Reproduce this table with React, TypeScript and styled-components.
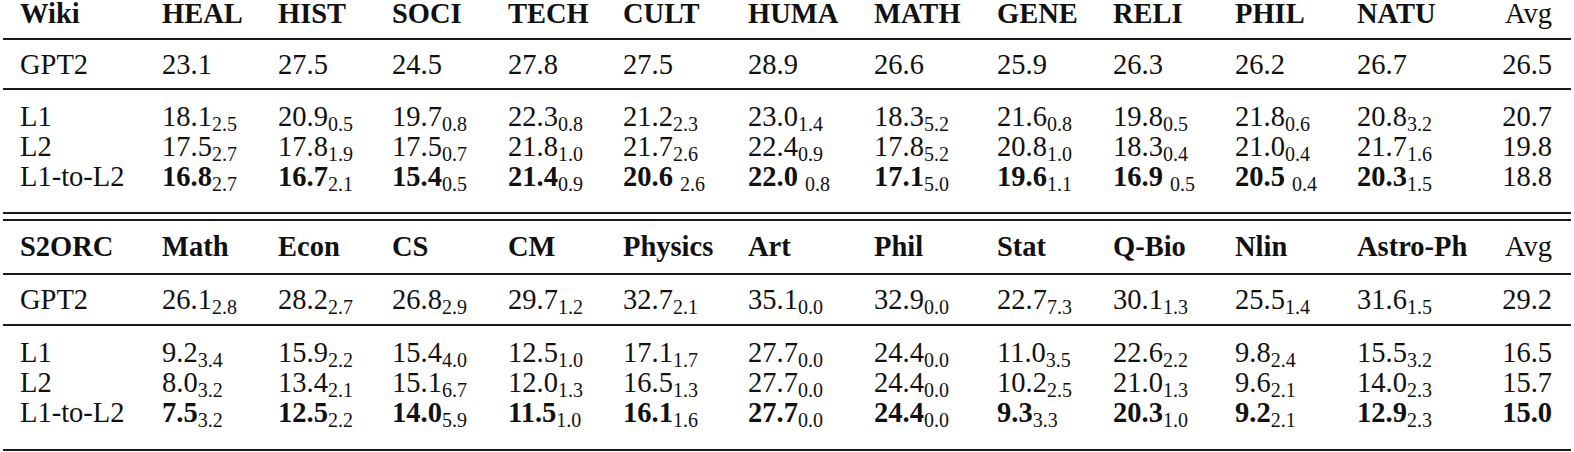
import React from 'react';
import styled, { createGlobalStyle } from 'styled-components';

const GlobalStyle = createGlobalStyle`
  html, body {
    margin: 0;
    padding: 0;
    background: #ffffff;
  }
  body {
    font-family: "Liberation Serif", "Times New Roman", Times, "DejaVu Serif", serif;
    color: #111111;
  }
`;

const Table = styled.div`
  width: 1568px;
  margin: 0 3px;
  font-family: "Liberation Serif", "Times New Roman", Times, "DejaVu Serif", serif;
  font-size: 28.5px;
`;

const Block = styled.div<{ $pt: number; $pb: number }>`
  padding-top: ${({ $pt }) => $pt}px;
  padding-bottom: ${({ $pb }) => $pb}px;
`;

const Rule = styled.div<{ $double?: boolean }>`
  height: ${({ $double }) => ($double ? '5px' : '0')};
  border-top: 2px solid #1a1a1a;
  border-bottom: ${({ $double }) => ($double ? '2px solid #1a1a1a' : 'none')};
`;

const Row = styled.div<{ $lh: number }>`
  display: grid;
  grid-template-columns: 142px 116px 114px 116px 115px 125px 126px 123px 116px 122px 122px 140px 1fr;
  padding: 0 19px 0 17px;
  height: ${({ $lh }) => $lh}px;
  line-height: ${({ $lh }) => $lh}px;
  white-space: nowrap;
`;

const Cell = styled.div<{ $bold?: boolean; $right?: boolean }>`
  font-weight: ${({ $bold }) => ($bold ? 700 : 400)};
  text-align: ${({ $right }) => ($right ? 'right' : 'left')};
`;

const Sub = styled.span<{ $gap?: boolean }>`
  font-size: 20px;
  font-weight: 400;
  line-height: 0;
  vertical-align: -5px;
  margin-left: ${({ $gap }) => ($gap ? '7px' : '0')};
`;

type RowData = { label: string; cells: string[]; avg: string; bold?: boolean; avgBold?: boolean };

const Value: React.FC<{ text: string; bold?: boolean }> = ({ text, bold }) => {
  const [main, sub] = text.split('_');
  const gap = main.endsWith(' ');
  return (
    <Cell $bold={bold}>
      {main.trim()}
      {sub && <Sub $gap={gap}>{sub}</Sub>}
    </Cell>
  );
};

const HeaderRow: React.FC<{ cols: string[]; lh: number }> = ({ cols, lh }) => (
  <Row $lh={lh}>
    {cols.map((c) => (
      <Cell key={c} $bold>
        {c}
      </Cell>
    ))}
    <Cell $right>Avg</Cell>
  </Row>
);

const DataRow: React.FC<{ row: RowData }> = ({ row }) => (
  <Row $lh={30}>
    <Cell>{row.label}</Cell>
    {row.cells.map((v, i) => (
      <Value key={i} text={v} bold={row.bold} />
    ))}
    <Cell $right $bold={row.avgBold}>
      {row.avg}
    </Cell>
  </Row>
);

const wiki = {
  cols: ['Wiki', 'HEAL', 'HIST', 'SOCI', 'TECH', 'CULT', 'HUMA', 'MATH', 'GENE', 'RELI', 'PHIL', 'NATU'],
  base: {
    label: 'GPT2',
    cells: ['23.1', '27.5', '24.5', '27.8', '27.5', '28.9', '26.6', '25.9', '26.3', '26.2', '26.7'],
    avg: '26.5',
  },
  rows: [
    {
      label: 'L1',
      cells: ['18.1_2.5', '20.9_0.5', '19.7_0.8', '22.3_0.8', '21.2_2.3', '23.0_1.4', '18.3_5.2', '21.6_0.8', '19.8_0.5', '21.8_0.6', '20.8_3.2'],
      avg: '20.7',
    },
    {
      label: 'L2',
      cells: ['17.5_2.7', '17.8_1.9', '17.5_0.7', '21.8_1.0', '21.7_2.6', '22.4_0.9', '17.8_5.2', '20.8_1.0', '18.3_0.4', '21.0_0.4', '21.7_1.6'],
      avg: '19.8',
    },
    {
      label: 'L1-to-L2',
      cells: ['16.8_2.7', '16.7_2.1', '15.4_0.5', '21.4_0.9', '20.6 _2.6', '22.0 _0.8', '17.1_5.0', '19.6_1.1', '16.9 _0.5', '20.5 _0.4', '20.3_1.5'],
      avg: '18.8',
      bold: true,
    },
  ] as RowData[],
};

const s2orc = {
  cols: ['S2ORC', 'Math', 'Econ', 'CS', 'CM', 'Physics', 'Art', 'Phil', 'Stat', 'Q-Bio', 'Nlin', 'Astro-Ph'],
  base: {
    label: 'GPT2',
    cells: ['26.1_2.8', '28.2_2.7', '26.8_2.9', '29.7_1.2', '32.7_2.1', '35.1_0.0', '32.9_0.0', '22.7_7.3', '30.1_1.3', '25.5_1.4', '31.6_1.5'],
    avg: '29.2',
  },
  rows: [
    {
      label: 'L1',
      cells: ['9.2_3.4', '15.9_2.2', '15.4_4.0', '12.5_1.0', '17.1_1.7', '27.7_0.0', '24.4_0.0', '11.0_3.5', '22.6_2.2', '9.8_2.4', '15.5_3.2'],
      avg: '16.5',
    },
    {
      label: 'L2',
      cells: ['8.0_3.2', '13.4_2.1', '15.1_6.7', '12.0_1.3', '16.5_1.3', '27.7_0.0', '24.4_0.0', '10.2_2.5', '21.0_1.3', '9.6_2.1', '14.0_2.3'],
      avg: '15.7',
    },
    {
      label: 'L1-to-L2',
      cells: ['7.5_3.2', '12.5_2.2', '14.0_5.9', '11.5_1.0', '16.1_1.6', '27.7_0.0', '24.4_0.0', '9.3_3.3', '20.3_1.0', '9.2_2.1', '12.9_2.3'],
      avg: '15.0',
      bold: true,
      avgBold: true,
    },
  ] as RowData[],
};

export default function App() {
  return (
    <>
      <GlobalStyle />
      <Table>
        <Block $pt={0} $pb={10}>
          <HeaderRow cols={wiki.cols} lh={28} />
        </Block>
        <Rule />
        <Block $pt={10} $pb={8}>
          <DataRow row={wiki.base} />
        </Block>
        <Rule />
        <Block $pt={12} $pb={20}>
          {wiki.rows.map((r) => (
            <DataRow key={r.label} row={r} />
          ))}
        </Block>
        <Rule $double />
        <Block $pt={11} $pb={11}>
          <HeaderRow cols={s2orc.cols} lh={30} />
        </Block>
        <Rule />
        <Block $pt={10} $pb={9}>
          <DataRow row={s2orc.base} />
        </Block>
        <Rule />
        <Block $pt={12} $pb={21}>
          {s2orc.rows.map((r) => (
            <DataRow key={r.label} row={r} />
          ))}
        </Block>
        <Rule />
      </Table>
    </>
  );
}
